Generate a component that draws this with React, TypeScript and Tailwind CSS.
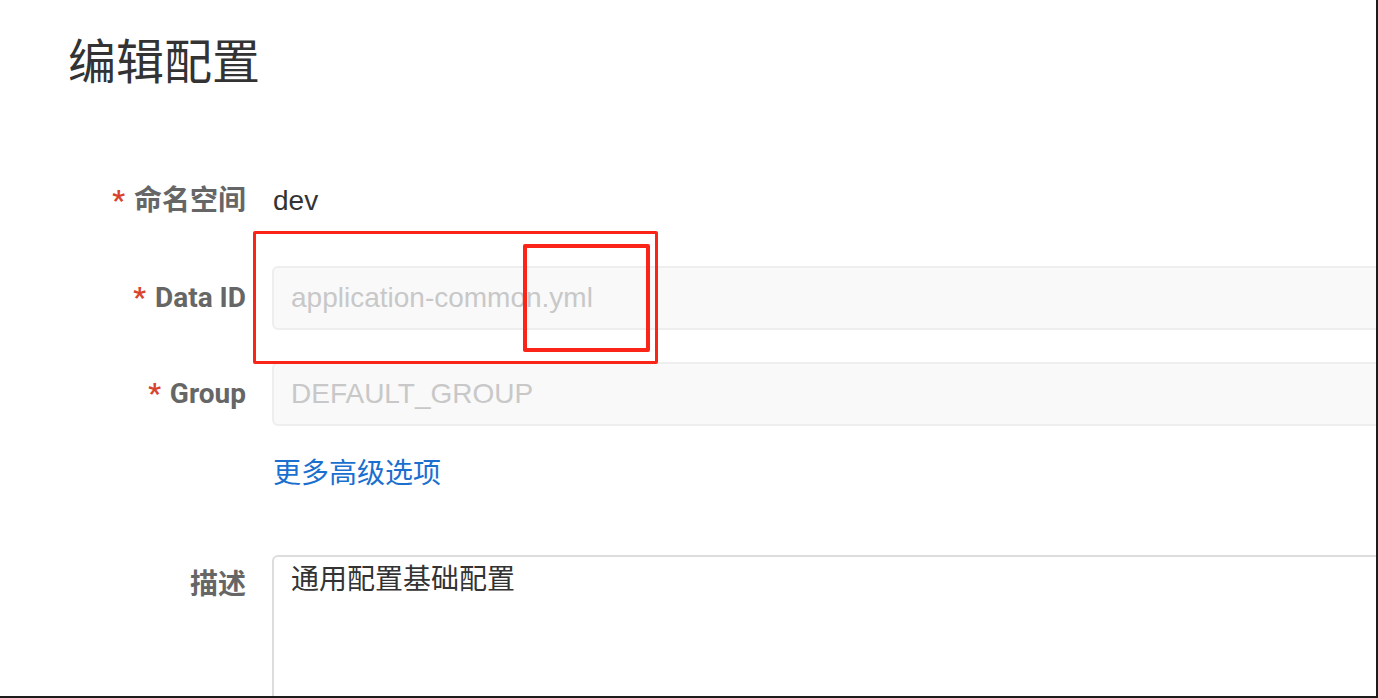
import React from "react";

const font = { fontFamily: '"Liberation Sans", "Noto Sans CJK SC", sans-serif' };
const labelFont = { fontFamily: 'Roboto, "Noto Sans CJK SC", sans-serif' };

function Label({ text, required }: { text: string; required?: boolean }) {
  return (
    <div
      className="w-[246px] shrink-0 flex justify-end items-center text-[28px] font-bold text-[#666666]"
      style={labelFont}
    >
      {required && <span className="text-[#d9432d] mr-[9px] font-bold">*</span>}
      <span>{text}</span>
    </div>
  );
}

export default function App() {
  return (
    <div
      className="relative w-[1378px] h-[698px] overflow-hidden bg-white border-r-2 border-b-2 border-[#1c1c1c]"
      style={font}
    >
      <div className="pt-[39px] pl-[68px] text-[48px] leading-[48px] text-[#333333]">编辑配置</div>

      <div className="mt-[82px] flex flex-col">
        <div className="flex h-[64px] items-center">
          <Label text="命名空间" required />
          <div className="ml-[27px] text-[28px] text-[#333333]">dev</div>
        </div>

        <div className="mt-[33px] flex h-[64px] items-center">
          <Label text="Data ID" required />
          <div className="ml-[26px] flex-1 h-[64px] flex items-center pl-[17px] bg-[#f9f9f9] border-2 border-[#eeeeee] rounded-[6px] text-[28px] text-[#c8c8c8] -mr-[20px]">
            application-common.yml
          </div>
        </div>

        <div className="mt-[32px] flex h-[64px] items-center">
          <Label text="Group" required />
          <div className="ml-[26px] flex-1 h-[64px] flex items-center pl-[17px] bg-[#f9f9f9] border-2 border-[#eeeeee] rounded-[6px] text-[28px] text-[#c8c8c8] -mr-[20px]">
            DEFAULT_GROUP
          </div>
        </div>

        <div className="mt-[32px] flex h-[32px] items-center">
          <div className="w-[246px] shrink-0" />
          <div className="ml-[27px] text-[28px] text-[#1a6fcf]">更多高级选项</div>
        </div>

        <div className="mt-[65px] flex items-start">
          <div
            className="w-[246px] shrink-0 flex justify-end items-center h-[60px] text-[28px] font-bold text-[#666666]"
            style={labelFont}
          >
            描述
          </div>
          <div className="ml-[26px] flex-1 h-[220px] border-2 border-[#dddddd] rounded-[6px] pl-[17px] pt-[5px] text-[28px] leading-[36px] text-[#333333] -mr-[20px]">
            通用配置基础配置
          </div>
        </div>
      </div>

      <div className="absolute left-[253px] top-[231px] w-[405px] h-[133px] border-[3px] border-[#fb2418] rounded-[2px]" />
      <div className="absolute left-[523px] top-[244px] w-[127px] h-[108px] border-[4px] border-[#fb2418] rounded-[2px]" />
    </div>
  );
}
